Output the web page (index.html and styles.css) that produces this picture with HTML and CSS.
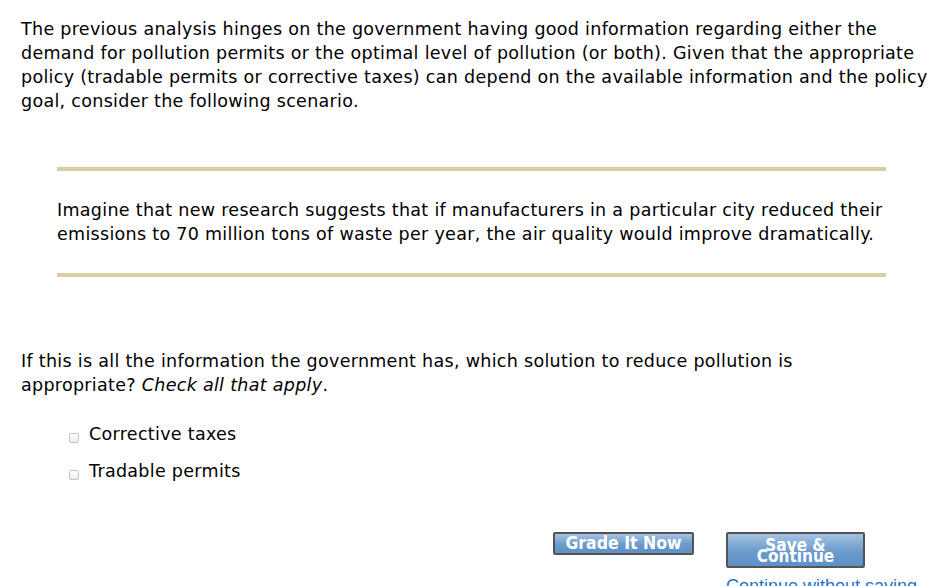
FILE: index.html
```html
<!DOCTYPE html>
<html>
<head>
<meta charset="utf-8">
<link rel="stylesheet" href="styles.css">
</head>
<body>
<div class="page">
  <p class="intro">The previous analysis hinges on the government having good information regarding either the demand for pollution permits or the optimal level of pollution (or both). Given that the appropriate policy (tradable permits or corrective taxes) can depend on the available information and the policy goal, consider the following scenario.</p>
  <div class="scenario">
    <p>Imagine that new research suggests that if manufacturers in a particular city reduced their emissions to 70 million tons of waste per year, the air quality would improve dramatically.</p>
  </div>
  <p class="question">If this is all the information the government has, which solution to reduce pollution is appropriate? <em>Check all that apply</em>.</p>
  <ul class="options">
    <li class="option"><span class="box"></span><span class="label">Corrective taxes</span></li>
    <li class="option"><span class="box"></span><span class="label">Tradable permits</span></li>
  </ul>
  <div class="actions">
    <button class="btn btn-grade">Grade It Now</button>
    <div class="save-col">
      <button class="btn btn-save">Save &amp;<br>Continue</button>
      <a class="skip" href="#">Continue without saving</a>
    </div>
  </div>
</div>
</body>
</html>
```

FILE: styles.css
```css
html, body {
  margin: 0;
  padding: 0;
  background: #fff;
}
body {
  font-family: "DejaVu Sans", Verdana, sans-serif;
  font-size: 17.5px;
  line-height: 24px;
  letter-spacing: 0.3px;
  color: #000;
  overflow: hidden;
}
.page {
  padding: 17px 12px 0 21px;
}
p {
  margin: 0;
}
.scenario {
  margin: 54px 48px 0 36px;
  border-top: 4px solid #dbcda3;
  border-bottom: 4px solid #dbcda3;
  padding: 27px 0 27px 0;
}
.question {
  max-width: 800px;
  margin-top: 72px;
}
.options {
  list-style: none;
  margin: 25px 0 0 0;
  padding: 0 0 0 48px;
  display: flex;
  flex-direction: column;
  gap: 13px;
}
.option {
  display: flex;
  align-items: flex-end;
}
.box {
  width: 8px;
  height: 8px;
  border: 1px solid #c4c4c4;
  border-radius: 2px;
  background: linear-gradient(#ffffff, #ececec);
  margin: 0 10px 3px 0;
  flex: none;
}
.actions {
  display: flex;
  justify-content: flex-end;
  align-items: flex-start;
  gap: 32px;
  margin: 49px 69px 0 0;
}
.btn {
  font-family: "DejaVu Sans Condensed", "DejaVu Sans", sans-serif;
  font-weight: bold;
  letter-spacing: 0;
  color: #fff;
  border: 2px solid #545454;
  border-radius: 2px;
  background: linear-gradient(#a6c2e2, #6b9bcd 55%, #5e90c6);
  padding: 0;
  cursor: pointer;
}
.btn-grade {
  width: 141px;
  height: 23px;
  font-size: 17.5px;
  line-height: 19px;
}
.save-col {
  width: 139px;
  display: flex;
  flex-direction: column;
}
.btn-save {
  width: 139px;
  height: 36px;
  font-size: 17px;
  line-height: 11px;
  padding-top: 2px;
}
.skip {
  font-family: "Liberation Sans", Arial, sans-serif;
  font-size: 18px;
  letter-spacing: 0;
  color: #1f73c9;
  text-decoration: none;
  margin-top: 6px;
  white-space: nowrap;
}
```
